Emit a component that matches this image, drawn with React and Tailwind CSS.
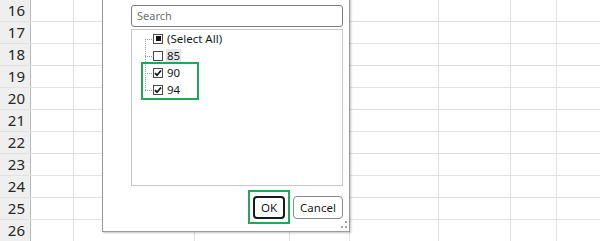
import React from 'react';

const rows = [16, 17, 18, 19, 20, 21, 22, 23, 24, 25, 26];
const cols = ['w-[43px]', 'w-[121px]', 'w-[95px]', 'w-[60px]', 'w-[89px]', 'w-[72px]', 'w-[46px]'];

function Box({ kind }) {
  return (
    <span className="w-[10px] h-[10px] border border-[#4a4a4a] bg-white flex items-center justify-center shrink-0">
      {kind === 'mixed' && <span className="w-[5px] h-[5px] bg-[#111]" />}
      {kind === 'on' && (
        <svg width="8" height="8" viewBox="0 0 8 8">
          <path d="M1 4.2 L3 6.2 L7 1.5" fill="none" stroke="#111" strokeWidth="1.7" />
        </svg>
      )}
    </span>
  );
}

export default function App() {
  const items = [
    { label: '(Select All)', kind: 'mixed' },
    { label: '85', kind: 'off', hot: true },
    { label: '90', kind: 'on' },
    { label: '94', kind: 'on' },
  ];

  return (
    <div className="relative w-[600px] h-[241px] overflow-hidden bg-white font-['Noto_Sans',sans-serif]">
      {/* sheet */}
      <div className="flex flex-col">
        {rows.map((r) => (
          <div key={r} className="flex h-[22px] shrink-0 border-b border-[#e2e2e2]">
            <div className="w-[31px] shrink-0 bg-[#efefef] border-r border-[#b8b8b8] flex items-center justify-end pr-[5px] text-[15px] text-[#262626]">
              {r}
            </div>
            {cols.map((w, i) => (
              <div key={i} className={`${w} shrink-0 border-r border-[#e2e2e2]`} />
            ))}
            <div className="flex-1" />
          </div>
        ))}
      </div>

      {/* filter dialog */}
      <div className="absolute left-[102px] top-[-12px] w-[248px] h-[244px] bg-white border border-[#9a9a9a] shadow-[1px_1px_2px_rgba(0,0,0,0.25)] pt-[16px] pl-[28px]">
        <div className="w-[212px] h-[22px] border border-[#7d7d7d] rounded-[3px] flex items-center pl-[5px] text-[11px] text-[#6f6f6f]">
          Search
        </div>
        <div className="relative w-[212px] h-[157px] mt-[2px] border border-[#c8c8c8]">
          <svg className="absolute left-0 top-0" width="24" height="70">
            <g stroke="#9a9a9a" strokeWidth="1" strokeDasharray="1 1">
              <line x1="13.5" y1="9" x2="13.5" y2="60" />
              <line x1="13" y1="9.5" x2="20" y2="9.5" />
              <line x1="13" y1="26.5" x2="20" y2="26.5" />
              <line x1="13" y1="43.5" x2="20" y2="43.5" />
              <line x1="13" y1="60.5" x2="20" y2="60.5" />
            </g>
          </svg>
          {items.map((it) => (
            <div key={it.label} className="flex items-center h-[17px] pl-[21px] gap-[3px] text-[11.5px] text-[#1a1a1a]">
              <Box kind={it.kind} />
              <span className={`px-[1px] leading-[14px] ${it.hot ? 'bg-[#e6e6e6]' : ''}`}>{it.label}</span>
            </div>
          ))}
        </div>
        <div className="w-[212px] mt-[10px] flex justify-end gap-[8px]">
          <div className="w-[32px] h-[23px] border-2 border-[#1a1a1a] rounded-[4px] flex items-center justify-center text-[11.5px] text-[#1a1a1a]">
            OK
          </div>
          <div className="w-[50px] h-[23px] border border-[#8a8a8a] rounded-[4px] flex items-center justify-center text-[11.5px] text-[#1a1a1a]">
            Cancel
          </div>
        </div>
        <span className="absolute right-[2px] bottom-[8px] w-[2px] h-[2px] bg-[#a0a0a0]" />
        <span className="absolute right-[2px] bottom-[3px] w-[2px] h-[2px] bg-[#a0a0a0]" />
        <span className="absolute right-[6px] bottom-[3px] w-[2px] h-[2px] bg-[#a0a0a0]" />
      </div>

      {/* highlight frames */}
      <div className="absolute left-[141px] top-[62px] w-[58px] h-[38px] border-2 border-[#20a85a]" />
      <div className="absolute left-[248px] top-[190px] w-[42px] h-[34px] border-[2.5px] border-[#20a85a]" />
    </div>
  );
}
